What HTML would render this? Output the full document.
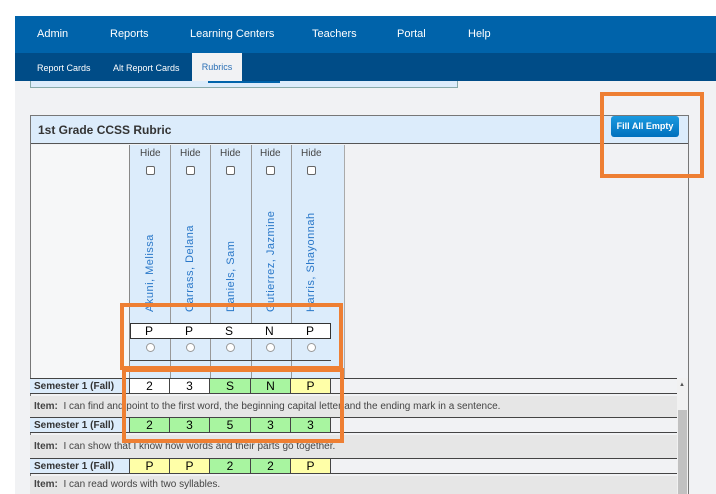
<!DOCTYPE html><html><head><style>
*{margin:0;padding:0;box-sizing:border-box}
body{width:716px;height:494px;overflow:hidden;background:#fff;font-family:"Liberation Sans",sans-serif;position:relative}
.a{position:absolute}
.nav{left:15px;top:16px;width:701px;height:37px;background:#0063aa;color:#fff;font-size:11px}
.nav span{position:absolute;top:12px}
.sub{left:15px;top:53px;width:701px;height:28px;background:#004c87;color:#fff;font-size:9px}
.sub span{position:absolute;top:10px}
.content{left:15px;top:81px;width:701px;height:413px;background:#f1f2f4}
.cell{position:absolute;text-align:center;font-size:12px;border-right:1px solid #444;height:100%;line-height:15px}
.row{position:absolute;left:30px;width:647px;border-top:1px solid #444;border-bottom:1px solid #444;height:16px}
.lab{position:absolute;left:0;top:0;width:100px;height:100%;background:#dcecfb;font-size:10px;font-weight:bold;color:#333;padding-left:4px;line-height:15px;border-right:1px solid #444}
.item{position:absolute;left:30px;width:647px;background:#e6e6e6;font-size:10px;color:#444;padding-left:4px}
.org{position:absolute;border:4px solid #ee7f33}
.name{position:absolute;transform:rotate(-90deg);transform-origin:left top;color:#2a78c9;font-size:11px;white-space:nowrap;letter-spacing:.5px}
.cb{position:absolute;width:9px;height:9px;border:1px solid #666;border-radius:2px;background:#fff}
.hide{position:absolute;font-size:10px;color:#444}
.bub{position:absolute;width:9px;height:9px;border:1px solid #999;border-radius:50%;background:#fff}
</style></head><body>
<div class="a nav"><span style="left:22px">Admin</span><span style="left:95px">Reports</span><span style="left:175px">Learning Centers</span><span style="left:297px">Teachers</span><span style="left:382px">Portal</span><span style="left:453px">Help</span></div>
<div class="a sub"><span style="left:22px">Report Cards</span><span style="left:98px">Alt Report Cards</span><div class="a" style="left:177px;top:0;width:50px;height:28px;background:#f1f2f4;color:#2a6fb5;font-size:9px;text-align:center;line-height:28px">Rubrics</div></div>
<div class="a content"></div>
<div class="a" style="left:30px;top:81px;width:428px;height:7px;border:1px solid #8aa;border-top:none;background:#dcecfb"></div>
<div class="a" style="left:208px;top:81px;width:72px;height:2px;background:#0063aa"></div>
<div class="a" style="left:30px;top:115px;width:659px;height:379px;border:1px solid #777;background:#f1f2f4"></div>
<div class="a" style="left:31px;top:116px;width:657px;height:28px;background:#dcecfb;border-bottom:1px solid #555"></div>
<div class="a" style="left:38px;top:123px;font-size:12px;font-weight:bold;color:#333">1st Grade CCSS Rubric</div>
<div class="a" style="left:611px;top:116px;width:68px;height:21px;border-radius:3px;background:linear-gradient(#1a9ae0,#0070bd);color:#fff;font-size:9px;font-weight:bold;text-align:center;line-height:21px">Fill All Empty</div>
<div class="a" style="left:31px;top:145px;width:99px;height:233px;background:#f6f7f8;border-right:1px solid #888"></div>
<div class="a" style="left:130px;top:145px;width:215px;height:233px;background:#dcecfb;border-right:1px solid #aaa"></div>
<div class="a" style="left:170px;top:145px;width:1px;height:233px;background:#999"></div>
<div class="a" style="left:210px;top:145px;width:1px;height:233px;background:#999"></div>
<div class="a" style="left:251px;top:145px;width:1px;height:233px;background:#999"></div>
<div class="a" style="left:291px;top:145px;width:1px;height:233px;background:#999"></div>
<div class="hide" style="left:140px;top:148px">Hide</div><div class="hide" style="left:180px;top:148px">Hide</div><div class="hide" style="left:220px;top:148px">Hide</div><div class="hide" style="left:260px;top:148px">Hide</div><div class="hide" style="left:301px;top:148px">Hide</div>
<div class="cb" style="left:146px;top:166px"></div><div class="cb" style="left:186px;top:166px"></div><div class="cb" style="left:226px;top:166px"></div><div class="cb" style="left:266px;top:166px"></div><div class="cb" style="left:307px;top:166px"></div>
<div class="name" style="left:144px;top:312px">Akuni, Melissa</div>
<div class="name" style="left:184px;top:312px">Carrass, Delana</div>
<div class="name" style="left:225px;top:312px">Daniels, Sam</div>
<div class="name" style="left:265px;top:312px">Gutierrez, Jazmine</div>
<div class="name" style="left:305px;top:312px">Harris, Shayonnah</div>
<div class="a" style="left:130px;top:323px;width:201px;height:16px;background:#fff;border:1px solid #333;font-size:12px">
<span class="a" style="left:14px">P</span><span class="a" style="left:54px">P</span><span class="a" style="left:94px">S</span><span class="a" style="left:134px">N</span><span class="a" style="left:175px">P</span></div>
<div class="bub" style="left:146px;top:343px"></div><div class="bub" style="left:186px;top:343px"></div><div class="bub" style="left:226px;top:343px"></div><div class="bub" style="left:266px;top:343px"></div><div class="bub" style="left:307px;top:343px"></div>
<div class="a" style="left:130px;top:360px;width:201px;height:1px;background:#444"></div>
<div class="row" style="top:378px;background:#f1f2f4"><div class="lab">Semester 1 (Fall)</div>
<div class="cell" style="left:100px;width:40px;background:#fff">2</div><div class="cell" style="left:140px;width:40px;background:#fff">3</div><div class="cell" style="left:180px;width:41px;background:#a8f5a0">S</div><div class="cell" style="left:221px;width:40px;background:#a8f5a0">N</div><div class="cell" style="left:261px;width:40px;background:#ffffa8">P</div></div>
<div class="item" style="top:396px;height:21px;line-height:21px"><b>Item:</b>&nbsp; I can find and point to the first word, the beginning capital letter and the ending mark in a sentence.</div>
<div class="row" style="top:417px;background:#f1f2f4"><div class="lab">Semester 1 (Fall)</div>
<div class="cell" style="left:100px;width:40px;background:#a8f5a0">2</div><div class="cell" style="left:140px;width:40px;background:#a8f5a0">3</div><div class="cell" style="left:180px;width:41px;background:#a8f5a0">5</div><div class="cell" style="left:221px;width:40px;background:#a8f5a0">3</div><div class="cell" style="left:261px;width:40px;background:#a8f5a0">3</div></div>
<div class="item" style="top:435px;height:23px;line-height:23px"><b>Item:</b>&nbsp; I can show that I know how words and their parts go together.</div>
<div class="row" style="top:458px;background:#f1f2f4"><div class="lab">Semester 1 (Fall)</div>
<div class="cell" style="left:100px;width:40px;background:#ffffa8">P</div><div class="cell" style="left:140px;width:40px;background:#ffffa8">P</div><div class="cell" style="left:180px;width:41px;background:#a8f5a0">2</div><div class="cell" style="left:221px;width:40px;background:#a8f5a0">2</div><div class="cell" style="left:261px;width:40px;background:#ffffa8">P</div></div>
<div class="item" style="top:476px;height:18px;line-height:18px"><b>Item:</b>&nbsp; I can read words with two syllables.</div>
<div class="a" style="left:677px;top:378px;width:11px;height:116px;background:#f1f1f1"></div>
<div class="a" style="left:678px;top:410px;width:9px;height:84px;background:#c1c1c1"></div>
<div class="a" style="left:679px;top:382px;font-size:6px;color:#555">▲</div>
<div class="org" style="left:600px;top:92px;width:104px;height:86px"></div>
<div class="org" style="left:120px;top:303px;width:223px;height:67px"></div>
<div class="org" style="left:122px;top:368px;width:222px;height:75px"></div>
</body></html>
